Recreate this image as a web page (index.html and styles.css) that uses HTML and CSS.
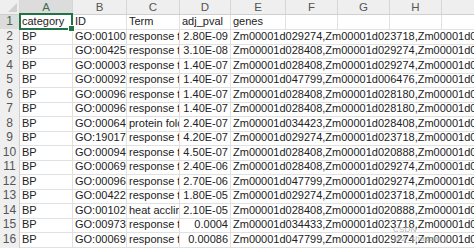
FILE: index.html
```html
<!DOCTYPE html>
<html lang="en">
<head>
    <meta charset="UTF-8">
    <meta name="viewport" content="width=device-width, initial-scale=1.0">
    <title>GO enrichment - Sheet1</title>
    <link rel="stylesheet" href="styles.css">
</head>
<body>
    <div class="sheet">
        <div class="row head">
            <div class="corner"><span class="tri"></span></div>
            <div class="col sel">A</div>
            <div class="col">B</div>
            <div class="col">C</div>
            <div class="col">D</div>
            <div class="col">E</div>
            <div class="col">F</div>
            <div class="col">G</div>
            <div class="col">H</div>
            <div class="col">I</div>
        </div>
        <div class="row">
            <div class="num sel">1</div>
            <div class="cell active">category</div>
            <div class="cell">ID</div>
            <div class="cell">Term</div>
            <div class="cell">adj_pval</div>
            <div class="cell">genes</div>
            <div class="cell"></div>
            <div class="cell"></div>
            <div class="cell"></div>
            <div class="cell"></div>
        </div>
        <div class="row">
            <div class="num">2</div>
            <div class="cell">BP</div>
            <div class="cell">GO:0010035</div>
            <div class="cell">response to inorganic substance</div>
            <div class="cell val">2.80E-09</div>
            <div class="cell genes">Zm00001d029274,Zm00001d023718,Zm00001d028408,Zm00001d028180</div>
        </div>
        <div class="row">
            <div class="num">3</div>
            <div class="cell">BP</div>
            <div class="cell">GO:0042542</div>
            <div class="cell">response to hydrogen peroxide</div>
            <div class="cell val">3.10E-08</div>
            <div class="cell genes">Zm00001d028408,Zm00001d029274,Zm00001d023718,Zm00001d028180</div>
        </div>
        <div class="row">
            <div class="num">4</div>
            <div class="cell">BP</div>
            <div class="cell">GO:0000302</div>
            <div class="cell">response to reactive oxygen species</div>
            <div class="cell val">1.40E-07</div>
            <div class="cell genes">Zm00001d028408,Zm00001d029274,Zm00001d023718,Zm00001d028180</div>
        </div>
        <div class="row">
            <div class="num">5</div>
            <div class="cell">BP</div>
            <div class="cell">GO:0009266</div>
            <div class="cell">response to temperature stimulus</div>
            <div class="cell val">1.40E-07</div>
            <div class="cell genes">Zm00001d047799,Zm00001d006476,Zm00001d028408,Zm00001d028180</div>
        </div>
        <div class="row">
            <div class="num">6</div>
            <div class="cell">BP</div>
            <div class="cell">GO:0009628</div>
            <div class="cell">response to abiotic stimulus</div>
            <div class="cell val">1.40E-07</div>
            <div class="cell genes">Zm00001d028408,Zm00001d028180,Zm00001d029274,Zm00001d023718</div>
        </div>
        <div class="row">
            <div class="num">7</div>
            <div class="cell">BP</div>
            <div class="cell">GO:0009644</div>
            <div class="cell">response to high light intensity</div>
            <div class="cell val">1.40E-07</div>
            <div class="cell genes">Zm00001d028408,Zm00001d028180,Zm00001d029274,Zm00001d047799</div>
        </div>
        <div class="row">
            <div class="num">8</div>
            <div class="cell">BP</div>
            <div class="cell">GO:0006457</div>
            <div class="cell">protein folding</div>
            <div class="cell val">2.40E-07</div>
            <div class="cell genes">Zm00001d034423,Zm00001d028408,Zm00001d020888,Zm00001d034433</div>
        </div>
        <div class="row">
            <div class="num">9</div>
            <div class="cell">BP</div>
            <div class="cell">GO:1901700</div>
            <div class="cell">response to oxygen-containing compound</div>
            <div class="cell val">4.20E-07</div>
            <div class="cell genes">Zm00001d029274,Zm00001d023718,Zm00001d028408,Zm00001d028180</div>
        </div>
        <div class="row">
            <div class="num">10</div>
            <div class="cell">BP</div>
            <div class="cell">GO:0009408</div>
            <div class="cell">response to heat</div>
            <div class="cell val">4.50E-07</div>
            <div class="cell genes">Zm00001d028408,Zm00001d020888,Zm00001d034423,Zm00001d047799</div>
        </div>
        <div class="row">
            <div class="num">11</div>
            <div class="cell">BP</div>
            <div class="cell">GO:0006979</div>
            <div class="cell">response to oxidative stress</div>
            <div class="cell val">2.40E-06</div>
            <div class="cell genes">Zm00001d028408,Zm00001d029274,Zm00001d023718,Zm00001d028180</div>
        </div>
        <div class="row">
            <div class="num">12</div>
            <div class="cell">BP</div>
            <div class="cell">GO:0009642</div>
            <div class="cell">response to light intensity</div>
            <div class="cell val">2.70E-06</div>
            <div class="cell genes">Zm00001d047799,Zm00001d029274,Zm00001d028408,Zm00001d028180</div>
        </div>
        <div class="row">
            <div class="num">13</div>
            <div class="cell">BP</div>
            <div class="cell">GO:0042221</div>
            <div class="cell">response to chemical</div>
            <div class="cell val">1.80E-05</div>
            <div class="cell genes">Zm00001d029274,Zm00001d023718,Zm00001d028408,Zm00001d047799</div>
        </div>
        <div class="row">
            <div class="num">14</div>
            <div class="cell">BP</div>
            <div class="cell">GO:0010286</div>
            <div class="cell">heat acclimation</div>
            <div class="cell val">2.10E-05</div>
            <div class="cell genes">Zm00001d028408,Zm00001d020888,Zm00001d034423,Zm00001d047799</div>
        </div>
        <div class="row">
            <div class="num">15</div>
            <div class="cell">BP</div>
            <div class="cell">GO:0097308</div>
            <div class="cell">response to farnesol</div>
            <div class="cell val">0.0004</div>
            <div class="cell genes">Zm00001d034433,Zm00001d023718,Zm00001d029274,Zm00001d028408</div>
        </div>
        <div class="row">
            <div class="num">16</div>
            <div class="cell">BP</div>
            <div class="cell">GO:0006950</div>
            <div class="cell">response to stress</div>
            <div class="cell val">0.00086</div>
            <div class="cell genes">Zm00001d047799,Zm00001d029274,Zm00001d028408,Zm00001d020888</div>
        </div>
        <div class="row">
            <div class="num">17</div>
            <div class="cell">BP</div>
            <div class="cell">GO:0001101</div>
            <div class="cell">response to acid chemical</div>
            <div class="cell val">0.0068</div>
            <div class="cell genes">Zm00001d006476,Zm00001d034433,Zm00001d029274,Zm00001d023718</div>
        </div>
    </div>
    <div class="mark">CSDN @Z_shadow_y</div>
</body>
</html>
```

FILE: styles.css
```css
body {
    margin: 0;
    background-color: #fff;
    font-family: "Liberation Sans", Arial, sans-serif;
    font-size: 11px;
    color: #222;
    overflow: hidden;
    position: relative;
    height: 248px;
}

.sheet {
    width: 520px;
}

.row {
    display: grid;
    grid-template-columns: 20px 53px 54px 53px 51px 55px 52px 52px 52px 78px;
    height: 14.5px;
}

.head {
    height: 14px;
    background-color: #efefef;
    color: #555;
}

.corner,
.col {
    border-right: 1px solid #d6d6d6;
    border-bottom: 1px solid #cfcfcf;
    text-align: center;
    line-height: 14px;
    font-size: 11.5px;
    position: relative;
}

.col.sel {
    background-color: #dcdcdc;
    color: #3d6b4f;
    border-bottom: 1px solid #217346;
}

/* little triangle in the top-left select-all box */
.tri {
    position: absolute;
    right: 2px;
    bottom: 2px;
    width: 0;
    height: 0;
    border-left: 9px solid transparent;
    border-bottom: 9px solid #d0d0d0;
}

.num {
    background-color: #efefef;
    color: #555;
    border-right: 1px solid #cfcfcf;
    border-bottom: 1px solid #dcdcdc;
    text-align: center;
    font-size: 12px;
    line-height: 15px;
}

.num.sel {
    background-color: #dcdcdc;
    color: #3d6b4f;
    border-right: 1px solid #217346;
}

.cell {
    border-right: 1px solid #e1e1e1;
    border-bottom: 1px solid #e1e1e1;
    padding-left: 2px;
    line-height: 15px;
    white-space: nowrap;
    overflow: hidden;
}

.val {
    text-align: right;
    padding-left: 0;
    padding-right: 2px;
}

.genes {
    grid-column: 6 / span 5;
    border-right: none;
}

/* current cell frame with its fill handle */
.active {
    position: relative;
    overflow: visible;
}

.active::after {
    content: "";
    position: absolute;
    left: -1px;
    top: -1px;
    right: -1px;
    bottom: -1px;
    border: 2px solid #217346;
}

.active::before {
    content: "";
    position: absolute;
    right: -3px;
    bottom: -3px;
    width: 5px;
    height: 5px;
    background-color: #217346;
    border: 1px solid #fff;
    z-index: 1;
}

.mark {
    position: absolute;
    left: 393px;
    top: 225px;
    font-size: 8px;
    color: #b4b4b4;
    letter-spacing: 0.2px;
}
```
